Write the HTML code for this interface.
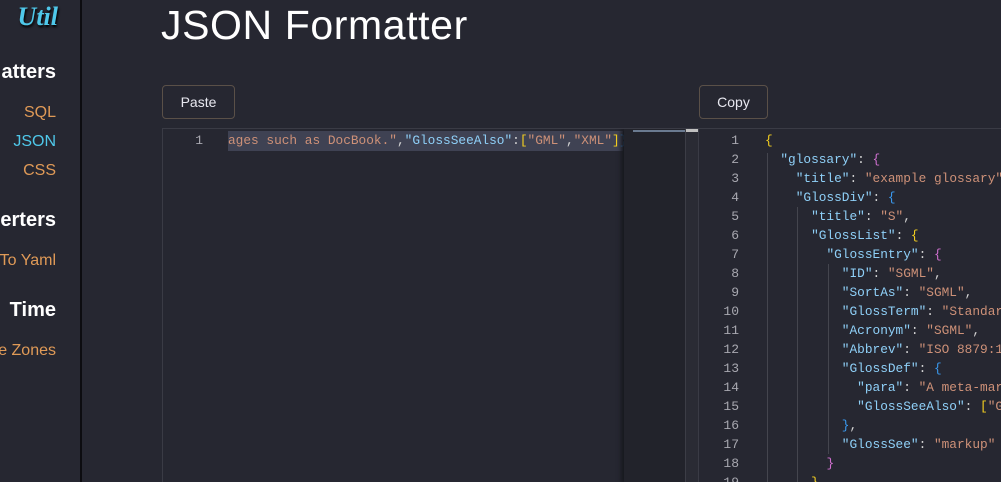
<!DOCTYPE html>
<html><head><meta charset="utf-8"><style>
*{margin:0;padding:0;box-sizing:border-box}
html,body{width:1001px;height:482px;overflow:hidden}
body{background:#262731;font-family:"Liberation Sans",sans-serif;position:relative}
.side{position:absolute;left:0;top:0;width:82px;height:482px;border-right:2px solid #0c0c10;background:#262731}
.side div{position:absolute;right:24px;white-space:nowrap;text-align:right}
.logo{font-family:"Liberation Serif",serif;font-style:italic;font-weight:bold;color:#4fc8ea;font-size:26px;top:2px;text-shadow:1px 2px 2px #000}
.h{color:#fff;font-weight:bold;font-size:20px}
.l{color:#e09a57;font-size:16px}
h1{position:absolute;left:161px;top:2px;font-size:41px;font-weight:normal;color:#fff;letter-spacing:0.6px}
.btn{position:absolute;height:34px;border:1px solid #5a5048;border-radius:4px;color:#e8e8f0;font-size:14px;text-align:center;line-height:32px}
.ed{position:absolute;top:128px;height:354px;border-top:1px solid #3a3b45;background:#262731;overflow:hidden}
.code{font-family:"Liberation Mono",monospace;font-size:12.8px;white-space:pre;position:absolute;line-height:19px}
.k{color:#8fd0f8}.s{color:#ce9178}.p{color:#d4d4d4}.y{color:#f5d020}.m{color:#d070d0}.b{color:#3a9af0}
.num{position:absolute;color:#a8a8b0;font-family:"Liberation Mono",monospace;font-size:13px;line-height:19px;text-align:right}
</style></head><body>
<div class="side">
<div class="logo" style="top:2px;right:22px">Util</div>
<div class="h" style="top:61px">atters</div>
<div class="l" style="top:104px">SQL</div>
<div class="l" style="top:133px;color:#4fc8ea">JSON</div>
<div class="l" style="top:162px">CSS</div>
<div class="h" style="top:209px">erters</div>
<div class="l" style="top:252px">To Yaml</div>
<div class="h" style="top:299px">Time</div>
<div class="l" style="top:342px">e Zones</div>
</div>
<h1>JSON Formatter</h1>
<div class="btn" style="left:162px;top:85px;width:73px">Paste</div>
<div class="btn" style="left:699px;top:85px;width:69px">Copy</div>

<div class="ed" style="left:162px;width:536px;border-left:1px solid #3a3b45">
<div class="num" style="left:0;width:40px;top:2px">1</div>
<div style="position:absolute;left:65px;top:2px;width:395px;height:20px;background:#3f4253"></div>
<div class="code" style="left:65px;top:2px"><span class="s">ages such as DocBook."</span><span class="p">,</span><span class="k">"GlossSeeAlso"</span><span class="p">:</span><span class="y">[</span><span class="s">"GML"</span><span class="p">,</span><span class="s">"XML"</span><span class="y">]</span><span class="b">}</span></div>
<div style="position:absolute;left:461px;top:0;width:61px;height:354px;background:#22232b;box-shadow:-3px 0 4px #18191f"></div>
<div style="position:absolute;left:470px;top:1px;width:52px;height:2px;background:#6a7a90"></div>
<div style="position:absolute;left:522px;top:0;width:1px;height:354px;background:#3c3d46"></div>
<div style="position:absolute;left:523px;top:0;width:13px;height:354px;background:#2a2b34"></div>
<div style="position:absolute;left:523px;top:0;width:13px;height:3px;background:#c0c0c0"></div>
</div>
<div class="ed" style="left:698px;width:303px;border-left:1px solid #3a3b45">
<div class="num" style="left:0;width:40px;top:2px">1<br>2<br>3<br>4<br>5<br>6<br>7<br>8<br>9<br>10<br>11<br>12<br>13<br>14<br>15<br>16<br>17<br>18<br>19</div>
<div style="position:absolute;left:68px;top:24px;width:1px;height:340px;background:#44454e"></div>
<div style="position:absolute;left:98px;top:78px;width:1px;height:290px;background:#44454e"></div>
<div style="position:absolute;left:129px;top:135px;width:1px;height:190px;background:#44454e"></div>
<div class="code" style="left:66px;top:2px"><span class="y">{</span>
  <span class="k">"glossary"</span><span class="p">: </span><span class="m">{</span>
    <span class="k">"title"</span><span class="p">: </span><span class="s">"example glossary"</span>
    <span class="k">"GlossDiv"</span><span class="p">: </span><span class="b">{</span>
      <span class="k">"title"</span><span class="p">: </span><span class="s">"S"</span><span class="p">,</span>
      <span class="k">"GlossList"</span><span class="p">: </span><span class="y">{</span>
        <span class="k">"GlossEntry"</span><span class="p">: </span><span class="m">{</span>
          <span class="k">"ID"</span><span class="p">: </span><span class="s">"SGML"</span><span class="p">,</span>
          <span class="k">"SortAs"</span><span class="p">: </span><span class="s">"SGML"</span><span class="p">,</span>
          <span class="k">"GlossTerm"</span><span class="p">: </span><span class="s">"Standard</span>
          <span class="k">"Acronym"</span><span class="p">: </span><span class="s">"SGML"</span><span class="p">,</span>
          <span class="k">"Abbrev"</span><span class="p">: </span><span class="s">"ISO 8879:1</span>
          <span class="k">"GlossDef"</span><span class="p">: </span><span class="b">{</span>
            <span class="k">"para"</span><span class="p">: </span><span class="s">"A meta-mar</span>
            <span class="k">"GlossSeeAlso"</span><span class="p">: </span><span class="y">[</span><span class="s">"G</span>
          <span class="b">}</span><span class="p">,</span>
          <span class="k">"GlossSee"</span><span class="p">: </span><span class="s">"markup"</span>
        <span class="m">}</span>
      <span class="y">}</span></div>
</div>
</body></html>
